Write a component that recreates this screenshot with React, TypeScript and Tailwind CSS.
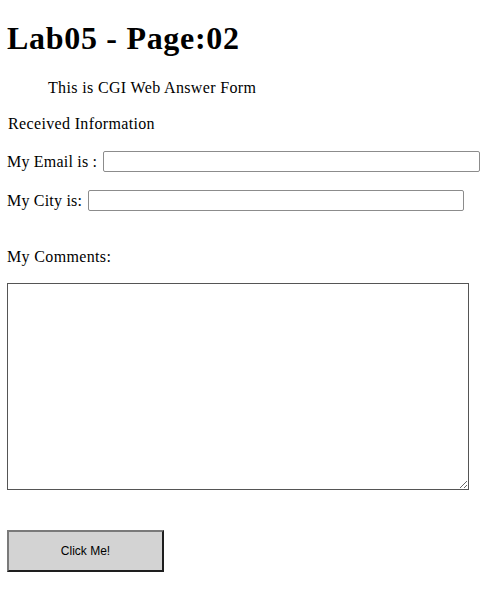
import React from "react";

export default function App() {
  return (
    <div className="min-h-screen bg-white pl-[7px] pt-px text-black">
      <div className="font-['Liberation_Serif','Times_New_Roman',serif] text-[16px] tracking-[0.35px]">
        <h1 className="mt-[19px] text-[32px] font-bold leading-[37px] tracking-[0.7px]">Lab05 - Page:02</h1>
        <p className="ml-[41px] mt-[22px] leading-[18px]">This is CGI Web Answer Form</p>
        <p className="ml-px mt-[18px] leading-[18px]">Received Information</p>
        <div className="mt-[18px] flex h-[21px] items-center">
          <span className="leading-[18px] tracking-[0.2px]">My Email is :</span>
          <input
            type="text"
            className="ml-[6px] h-[21px] w-[377px] rounded-[2px] border border-[#8c8c8c] bg-white px-1 outline-none"
          />
        </div>
        <div className="mt-[18px] flex h-[21px] items-center">
          <span className="leading-[18px] tracking-[0.2px]">My City is:</span>
          <input
            type="text"
            className="ml-[6px] h-[21px] w-[376px] rounded-[2px] border border-[#8c8c8c] bg-white px-1 outline-none"
          />
        </div>
        <p className="mt-[37px] leading-[18px]">My Comments:</p>
        <textarea className="mt-[17px] block h-[207px] w-[462px] border border-[#555555] bg-white outline-none" />
        <button
          type="button"
          className="mt-[40px] block h-[42px] w-[157px] border-2 border-b-[#1e1e1e] border-l-[#7a7a7a] border-r-[#1e1e1e] border-t-[#7a7a7a] bg-[#d3d3d3] font-['Liberation_Sans',Arial,sans-serif] text-[12px] tracking-normal text-black"
        >
          Click Me!
        </button>
      </div>
    </div>
  );
}
